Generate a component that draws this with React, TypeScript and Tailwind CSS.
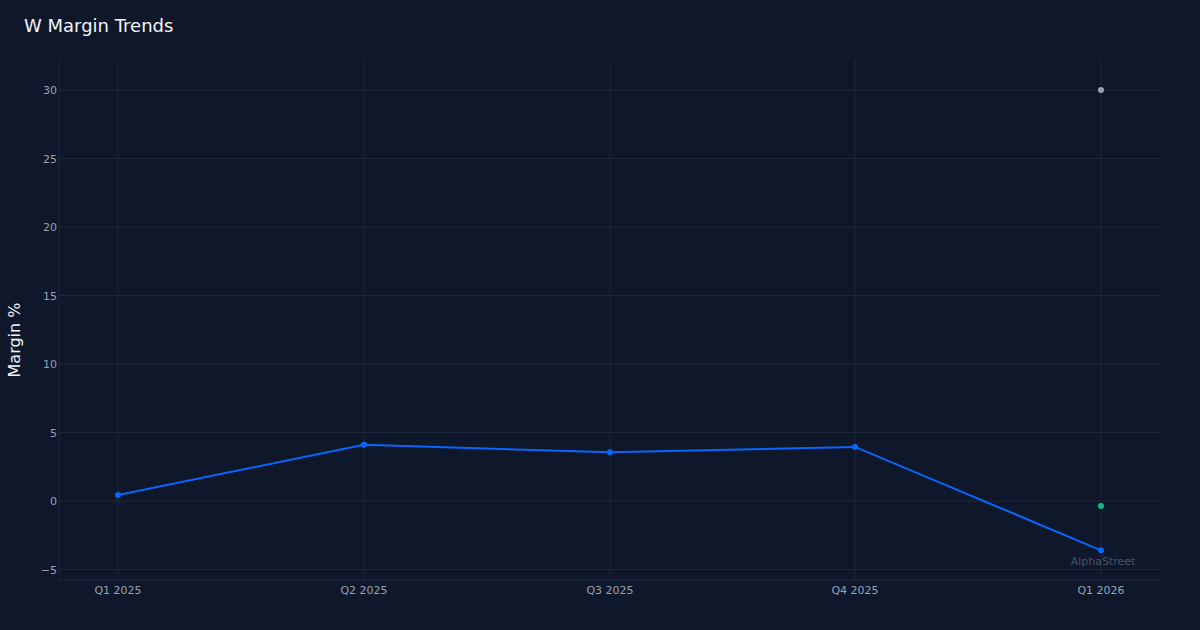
const ys = [30, 25, 20, 15, 10, 5, 0, -5]
const xs = [118, 364, 610, 855, 1101]
const qs = ["Q1 2025", "Q2 2025", "Q3 2025", "Q4 2025", "Q1 2026"]
const vals = [0.44, 4.1, 3.55, 3.95, -3.6]
const yOf = (v: number) => 501 - v * 13.7
const OX = 30
const OY = 50

export default function App() {
  const pts = xs.map((x, i) => `${x - OX},${yOf(vals[i]) - OY}`).join(" ")
  return (
    <div className="w-[1200px] h-[630px] bg-[#0f172a] flex flex-col" style={{ fontFamily: "'DejaVu Sans', sans-serif" }}>
      <div className="h-[50px] pl-6 pt-[12px] text-[18px] text-[#f1f5f9]">W Margin Trends</div>
      <div className="flex flex-1">
        <div className="w-[30px] flex items-center justify-center">
          <span className="-rotate-90 whitespace-nowrap text-[16px] text-[#f1f5f9]">Margin %</span>
        </div>
        <svg width="1170" height="580" className="block">
          {xs.map((x) => (
            <line key={x} x1={x - OX} x2={x - OX} y1={10} y2={530} stroke="#1e293b" strokeWidth="1" />
          ))}
          {ys.map((v) => (
            <g key={v}>
              <line x1={29} x2={1130} y1={yOf(v) - OY} y2={yOf(v) - OY} stroke="#1e293b" strokeWidth="1" />
              <text x={27} y={yOf(v) - OY + 4} textAnchor="end" fontSize="11" fill="#94a3b8">{v < 0 ? "−5" : v}</text>
            </g>
          ))}
          <line x1={29} x2={29} y1={10} y2={530} stroke="#1e293b" />
          <line x1={29} x2={1130} y1={530} y2={530} stroke="#1e293b" />
          {xs.map((x, i) => (
            <text key={x} x={x - OX} y={544} textAnchor="middle" fontSize="11" fill="#94a3b8">{qs[i]}</text>
          ))}
          <polyline points={pts} fill="none" stroke="#0866ff" strokeWidth="2" />
          {xs.map((x, i) => (
            <circle key={x} cx={x - OX} cy={yOf(vals[i]) - OY} r="3" fill="#0866ff" />
          ))}
          <circle cx={1101 - OX} cy={90 - OY} r="3" fill="#94a3b8" />
          <circle cx={1101 - OX} cy={506 - OY} r="3" fill="#10b981" />
          <text x={1103 - OX} y={565 - OY} textAnchor="middle" fontSize="11" fill="#475569">AlphaStreet</text>
        </svg>
      </div>
    </div>
  )
}
